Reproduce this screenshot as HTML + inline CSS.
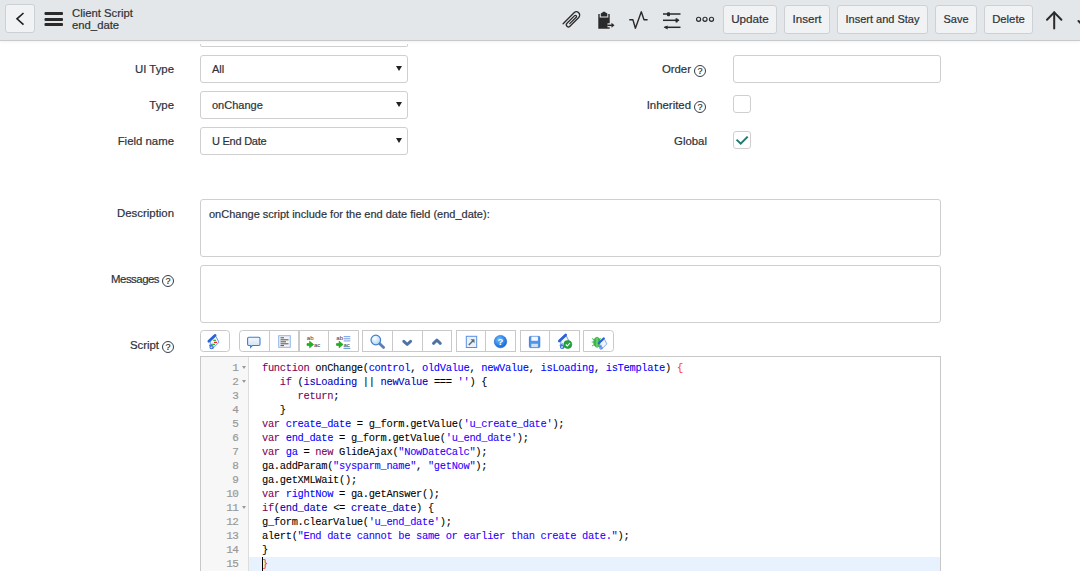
<!DOCTYPE html>
<html><head><meta charset="utf-8">
<style>
*{box-sizing:border-box}
html,body{margin:0;padding:0;width:1080px;height:573px;overflow:hidden;background:#fff}
body{font-family:"Liberation Sans",sans-serif;font-size:11px;color:#2b323b;position:relative;-webkit-text-stroke:0.2px}
.abs{position:absolute}
#hdr{position:absolute;left:0;top:0;width:1080px;height:41px;background:#e4e7ea;border-bottom:1px solid #c8c9cb;box-shadow:0 1px 3px rgba(0,0,0,0.06);z-index:5}
.btn{position:absolute;top:5px;height:29px;background:#f1f2f4;border:1px solid #cdd0d4;border-radius:3px;color:#2e3338;font-size:11px;line-height:26px;text-align:center;white-space:nowrap}
.lbl{position:absolute;text-align:right;white-space:nowrap;color:#2b323b;font-size:11.4px;line-height:12px}
.fld{position:absolute;background:#fff;border:1px solid #cfcfcf;border-radius:3px}
.sel .v{position:absolute;left:11px;top:0;line-height:26px;color:#2b323b}
.sel .arr{position:absolute;right:5px;top:10px;width:0;height:0;border-left:3px solid transparent;border-right:3px solid transparent;border-top:5px solid #222}
.help{display:inline-block;margin-left:3px;position:relative;top:1px;width:12px;height:12px;border:1px solid #343d47;border-radius:50%;font-size:9px;line-height:10px;text-align:center;vertical-align:middle}
.cb{position:absolute;width:18px;height:18px;border:1px solid #cfcfcf;border-radius:3px;background:#fff}
.ln{position:absolute;left:61px;height:14px;line-height:14px;font-family:"Liberation Mono",monospace;font-size:10.4px;letter-spacing:-0.31px;color:#000;white-space:pre;-webkit-text-stroke:0.08px}
.gn{position:absolute;left:0;width:37px;height:14px;line-height:14px;text-align:right;font-family:"Liberation Mono",monospace;font-size:11px;letter-spacing:-0.75px;color:#999;white-space:pre}
.fold{position:absolute;left:41px;width:0;height:0;border-left:2px solid transparent;border-right:2px solid transparent;border-top:3px solid #999}
#gut{position:absolute;left:0;top:0;width:48px;height:100%;background:#f7f7f7;border-right:1px solid #ddd}
#act{position:absolute;left:48px;top:200px;width:700px;height:14px;background:#e8f2ff}
#cur{position:absolute;left:61px;top:200px;width:1px;height:14px;background:#000}
</style></head>
<body>
<div id="hdr">
  <div class="btn" style="left:5px;top:4px;width:30px;height:29px"></div>
  <svg class="abs" style="left:0;top:0" width="1080" height="40">
    <path d="M23.5 13 L17 18.8 L23.5 24.6" fill="none" stroke="#1e2024" stroke-width="1.6"/>
    <rect x="44.5" y="12" width="18.5" height="3" rx="1" fill="#2a2a2a"/>
    <rect x="44.5" y="18" width="18.5" height="3" rx="1" fill="#2a2a2a"/>
    <rect x="44.5" y="23" width="18.5" height="3" rx="1" fill="#2a2a2a"/>
    <g fill="none" stroke="#2a2a2a" stroke-width="1.3" stroke-linecap="round">
      <path transform="translate(572 19.5) rotate(45)" d="M-3.3 9.3 V-6.2 A3.3 3.3 0 0 1 3.3 -6.2 V6.2 A2.1 2.1 0 0 1 -0.9 6.2 V-4.6 A1.1 1.1 0 0 1 1.3 -4.6 V4.5"/>
    </g>
    <g fill="#2a2a2a">
      <path d="M598.3 14 H599.7 V17.6 H608.3 V14 H609.7 V28.7 H598.3 Z"/>
      <path d="M600.8 13.6 L604 11.6 L607.3 13.6 V16.4 H600.8 Z"/>
    </g>
    <path d="M607.5 25.3 H613.6" stroke="#e4e7ea" stroke-width="4"/>
    <path d="M607.3 25.3 H613" stroke="#2a2a2a" stroke-width="1.5"/>
    <path d="M611.5 22.8 L614.5 25.3 L611.5 27.8 Z" fill="#2a2a2a"/>
    <polyline points="629.3,19.8 632.9,19.8 635.4,28.2 641.3,11.8 644,19.8 647.6,19.8" fill="none" stroke="#2a2a2a" stroke-width="1.4" stroke-linejoin="round"/>
    <g stroke="#2a2a2a" stroke-width="1.5">
      <path d="M663 14 H680.5"/><path d="M663 20.3 H679"/><path d="M664.5 27.3 H680.5"/>
    </g>
    <g fill="#2a2a2a">
      <rect x="667" y="12.2" width="3" height="4" rx="1"/>
      <path d="M676 18.4 L679.5 20.3 L676 22.4 Z"/><rect x="675.5" y="18.4" width="2" height="4"/>
      <path d="M667.6 25.4 L663.6 27.3 L667.6 29.4 Z"/>
    </g>
    <g fill="none" stroke="#2a2a2a" stroke-width="1.15">
      <circle cx="698.6" cy="19.3" r="2.05"/><circle cx="705" cy="19.3" r="2.05"/><circle cx="711.5" cy="19.3" r="2.05"/>
    </g>
    <g fill="none" stroke="#2a2a2a" stroke-width="2" stroke-linecap="round">
      <path d="M1047 19.8 L1054.2 12.4 L1061.4 19.8"/><path d="M1054.2 12.6 V28.4"/>
      <path d="M1078.5 21 L1086 28.4 L1093.5 21"/><path d="M1086 12.2 V28"/>
    </g>
  </svg>
  <div class="abs" style="left:72px;top:7px;font-size:11.3px;line-height:12px;color:#2e3338">Client Script<br>end_date</div>
  <div class="btn" style="left:723px;width:54px;font-size:11.7px">Update</div>
  <div class="btn" style="left:784px;width:46px;font-size:11.6px">Insert</div>
  <div class="btn" style="left:837px;width:91px">Insert and Stay</div>
  <div class="btn" style="left:935px;width:42px">Save</div>
  <div class="btn" style="left:984px;width:49px;font-size:11.3px">Delete</div>
</div>

<!-- form -->
<div class="fld" style="left:200px;top:44px;width:208px;height:3px;border-top:none;border-radius:0 0 2px 2px"></div>

<div class="lbl" style="right:906px;top:63px">UI Type</div>
<div class="fld sel" style="left:200px;top:55px;width:208px;height:28px"><span class="v">All</span><i class="arr"></i></div>
<div class="lbl" style="right:906px;top:99px">Type</div>
<div class="fld sel" style="left:200px;top:91px;width:208px;height:28px"><span class="v">onChange</span><i class="arr"></i></div>
<div class="lbl" style="right:906px;top:135px">Field name</div>
<div class="fld sel" style="left:200px;top:127px;width:208px;height:28px"><span class="v" style="letter-spacing:-0.25px">U End Date</span><i class="arr"></i></div>

<div class="lbl" style="right:374px;top:63px">Order<span class="help">?</span></div>
<div class="fld" style="left:733px;top:55px;width:208px;height:28px"></div>
<div class="lbl" style="right:374px;top:99px">Inherited<span class="help">?</span></div>
<div class="cb" style="left:733px;top:95px"></div>
<div class="lbl" style="right:373px;top:135px">Global</div>
<div class="cb" style="left:733px;top:131px"><svg class="abs" style="left:-1px;top:-1px" width="17" height="17"><path d="M3.6 8.6 L7.7 12.7 L14.7 5.6" fill="none" stroke="#1d7a72" stroke-width="2"/></svg></div>

<div class="lbl" style="right:906px;top:207px">Description</div>
<div class="fld" style="left:200px;top:199px;width:741px;height:58px"><span class="abs" style="left:8px;top:8px;line-height:12px;color:#2b323b">onChange script include for the end date field (end_date):</span></div>
<div class="lbl" style="right:906px;top:273px"><span style="letter-spacing:-0.5px">Messages</span><span class="help">?</span></div>
<div class="fld" style="left:200px;top:265px;width:741px;height:58px"></div>
<div class="lbl" style="right:906px;top:339px">Script<span class="help">?</span></div>

<!-- script toolbar -->
<svg class="abs" style="left:0;top:0" width="640" height="356" viewBox="0 0 640 356">
 <defs>
  <linearGradient id="gb" x1="0" y1="0" x2="0" y2="1"><stop offset="0" stop-color="#f4f8fd"/><stop offset="1" stop-color="#cfe0f3"/></linearGradient>
  <radialGradient id="gh" cx="0.4" cy="0.35" r="0.7"><stop offset="0" stop-color="#6fc0ff"/><stop offset="1" stop-color="#0a62d8"/></radialGradient>
  <radialGradient id="gm" cx="0.4" cy="0.35" r="0.7"><stop offset="0" stop-color="#ffffff"/><stop offset="1" stop-color="#a9d2f5"/></radialGradient>
 </defs>
 <g fill="#fff" stroke="#c9c9c9" stroke-width="1">
  <rect x="200.5" y="330.5" width="29" height="21" rx="3"/>
  <path d="M242.5 330.5 H358.5 V351.5 H242.5 A3 3 0 0 1 239.5 348.5 V333.5 A3 3 0 0 1 242.5 330.5 Z"/>
  <rect x="362.5" y="330.5" width="89" height="21"/>
  <rect x="456.5" y="330.5" width="59" height="21"/>
  <rect x="520.5" y="330.5" width="59" height="21"/>
  <path d="M583.5 330.5 H610.5 A3 3 0 0 1 613.5 333.5 V348.5 A3 3 0 0 1 610.5 351.5 H583.5 Z"/>
 </g>
 <g stroke="#c9c9c9" stroke-width="1">
  <path d="M269.5 331 V351"/><path d="M298.5 331 V351"/><path d="M299.5 331 V351"/><path d="M328.5 331 V351"/>
  <path d="M392.5 331 V351"/><path d="M422.5 331 V351"/>
  <path d="M485.5 331 V351"/><path d="M549.5 331 V351"/>
 </g>
 <!-- 1 script -->
 <g transform="translate(0 0)">
  <path d="M210.3 340.8 L215.8 336.2 L219 342.3 L213 348.2 L210.3 345.8 Z" fill="#eef5fd" stroke="#6e9be8" stroke-width="1"/>
  <path d="M208.8 341.3 L215.2 335.3" stroke="#2a62d8" stroke-width="2.6" stroke-linecap="round"/>
  <path d="M209.6 345.6 L212 344.2" stroke="#4f86e6" stroke-width="1.2" stroke-linecap="round"/>
  <circle cx="211.6" cy="347.2" r="1.6" fill="none" stroke="#2f6ae0" stroke-width="1.1"/>
  <path d="M213.2 340.3 H216" stroke="#27b327" stroke-width="1.2"/><path d="M214 342.4 H217" stroke="#e22" stroke-width="1.2"/><path d="M212.3 344.4 H215" stroke="#27b327" stroke-width="1.2"/>
 </g>
 <!-- 2 comment -->
 <path d="M248.8 337.3 H258.8 A1.2 1.2 0 0 1 260 338.5 V344.3 A1.2 1.2 0 0 1 258.8 345.5 H252.3 L250.6 347.3 V345.5 H248.8 A1.2 1.2 0 0 1 247.6 344.3 V338.5 A1.2 1.2 0 0 1 248.8 337.3 Z" fill="url(#gb)" stroke="#3b7fd0" stroke-width="1.1"/>
 <!-- 3 format -->
 <rect x="278.7" y="335.7" width="11.6" height="11.6" fill="#f3f3f3" stroke="#8fb4ec" stroke-width="1"/>
 <g stroke="#555" stroke-width="1"><path d="M280.5 337.8 H284"/><path d="M280.5 339.8 H288.5"/><path d="M280.5 341.8 H286"/><path d="M280.5 343.8 H288.5"/><path d="M280.5 345.6 H284"/></g>
 <!-- 4 replace -->
 <text x="306.8" y="339.6" font-family="Liberation Sans" font-size="6" fill="#333" style="-webkit-text-stroke:0.2px #333">ab</text>
 <path d="M307 343.6 H309.6 V341.2 L313.6 344.5 L309.6 347.8 V345.4 H307 Z" fill="#1fb51f" stroke="#139013" stroke-width="0.6"/>
 <text x="314" y="347" font-family="Liberation Sans" font-size="6" fill="#333" style="-webkit-text-stroke:0.2px #333">ac</text>
 <!-- 5 replace all -->
 <rect x="343.7" y="336" width="6.6" height="5.6" fill="#e3ecf9"/>
 <g stroke="#7ea6e6" stroke-width="0.9"><path d="M343.7 336.5 H350.3"/><path d="M343.7 338.7 H350.3"/><path d="M343.7 340.9 H350.3"/></g>
 <text x="336.3" y="339.6" font-family="Liberation Sans" font-size="6" fill="#333" style="-webkit-text-stroke:0.2px #333">ab</text>
 <path d="M336.5 343.6 H339.1 V341.2 L343.1 344.5 L339.1 347.8 V345.4 H336.5 Z" fill="#1fb51f" stroke="#139013" stroke-width="0.6"/>
 <text x="343.5" y="347" font-family="Liberation Sans" font-size="6" fill="#333" style="-webkit-text-stroke:0.2px #333">ac</text>
 <path d="M343.5 348.3 H350.3" stroke="#3b7fd0" stroke-width="0.9"/>
 <!-- 6 magnifier -->
 <path d="M379 343 L383.6 347.6" stroke="#5a7fb2" stroke-width="2.8" stroke-linecap="round"/>
 <circle cx="375.8" cy="340" r="4.8" fill="url(#gm)" stroke="#3f7fd0" stroke-width="1.2"/>
 <!-- 7 down / 8 up -->
 <path d="M403.8 341.3 L407.2 344.5 L410.6 341.3" fill="none" stroke="#4a7fc4" stroke-width="3" stroke-linecap="round" stroke-linejoin="round"/>
 <path d="M403.8 341.3 L407.2 344.5 L410.6 341.3" fill="none" stroke="#5c6f82" stroke-width="1.5" stroke-linecap="round" stroke-linejoin="round"/>
 <path d="M433.5 343.3 L436.9 340.1 L440.3 343.3" fill="none" stroke="#4a7fc4" stroke-width="3" stroke-linecap="round" stroke-linejoin="round"/>
 <path d="M433.5 343.3 L436.9 340.1 L440.3 343.3" fill="none" stroke="#5c6f82" stroke-width="1.5" stroke-linecap="round" stroke-linejoin="round"/>
 <!-- 9 fullscreen -->
 <rect x="466.3" y="336.3" width="10.4" height="11.2" fill="#eaf1fb" stroke="#5a8fe0" stroke-width="1"/>
 <path d="M468.8 345 L473.5 340.3" stroke="#5a6a7a" stroke-width="1.5"/>
 <path d="M470.5 339.3 H474.5 V343.3 Z" fill="#5a6a7a"/>
 <!-- 10 help -->
 <circle cx="500.5" cy="341.6" r="6.2" fill="url(#gh)" stroke="#1b62c8" stroke-width="0.6"/>
 <text x="500.5" y="345.3" text-anchor="middle" font-family="Liberation Sans" font-weight="bold" font-size="9.5" fill="#fff">?</text>
 <!-- 11 save -->
 <rect x="529.4" y="336.4" width="10.4" height="11.2" rx="1" fill="#4f95ea" stroke="#2d6fd6" stroke-width="0.8"/>
 <rect x="531.3" y="336.6" width="6.6" height="4.2" fill="#f4f8ff"/>
 <rect x="531.3" y="343.8" width="6.6" height="3.4" fill="#cfe0f6"/>
 <!-- 12 check script -->
 <g transform="translate(350.5 -0.3)">
  <path d="M210.3 340.8 L215.8 336.2 L219 342.3 L213 348.2 L210.3 345.8 Z" fill="#eef5fd" stroke="#6e9be8" stroke-width="1"/>
  <path d="M208.8 341.3 L215.2 335.3" stroke="#2a62d8" stroke-width="2.6" stroke-linecap="round"/>
  <path d="M209.6 345.6 L212 344.2" stroke="#4f86e6" stroke-width="1.2" stroke-linecap="round"/>
  <circle cx="211.6" cy="347.2" r="1.6" fill="none" stroke="#2f6ae0" stroke-width="1.1"/>
  
 </g>
 <circle cx="567.8" cy="344.5" r="4" fill="#22a63a" stroke="#138a2a" stroke-width="0.6"/>
 <path d="M565.8 344.5 L567.3 346 L570 343" fill="none" stroke="#fff" stroke-width="1.1"/>
 <!-- 13 bug -->
 <g stroke="#2fb83f" stroke-width="0.9"><path d="M592 338.5 L594.5 340"/><path d="M591.7 342 H594"/><path d="M592 346 L594.5 344.5"/><path d="M601 338.5 L598.5 340"/></g>
 <ellipse cx="597" cy="342.3" rx="3.3" ry="5" fill="#3cbc4a" stroke="#2a9a36" stroke-width="0.6"/>
 <path d="M597 337.5 V347" stroke="#9be39f" stroke-width="0.8"/>
 <g transform="translate(602.5 343.3) scale(0.8) translate(-213.5 -341.5)"><g transform="translate(0 0)">
  <path d="M210.3 340.8 L215.8 336.2 L219 342.3 L213 348.2 L210.3 345.8 Z" fill="#eef5fd" stroke="#6e9be8" stroke-width="1"/>
  <path d="M208.8 341.3 L215.2 335.3" stroke="#2a62d8" stroke-width="2.6" stroke-linecap="round"/>
  <path d="M209.6 345.6 L212 344.2" stroke="#4f86e6" stroke-width="1.2" stroke-linecap="round"/>
  <circle cx="211.6" cy="347.2" r="1.6" fill="none" stroke="#2f6ae0" stroke-width="1.1"/>
  
 </g>
 </g>
</svg>
<!-- editor -->
<div class="abs" id="ed" style="left:200px;top:356px;width:741px;height:215px;border:1px solid #c8c8c8;border-bottom:none;background:#fff;overflow:hidden">
<div id="gut"></div><div id="act"></div>
<div class="ln" style="top:4px"><span style="color:#7f0055">function</span> onChange(<span style="color:#0000ff">control</span>, <span style="color:#0000ff">oldValue</span>, <span style="color:#0000ff">newValue</span>, <span style="color:#0000ff">isLoading</span>, <span style="color:#0000ff">isTemplate</span>) <span style="color:#ff3b2b">{</span></div>
<div class="gn" style="top:4px">1</div>
<i class="fold" style="top:9px"></i>
<div class="ln" style="top:18px">   <span style="color:#7f0055">if</span> (<span style="color:#0000c0">isLoading</span> || <span style="color:#0000c0">newValue</span> === <span style="color:#2a00ff">&#x27;&#x27;</span>) {</div>
<div class="gn" style="top:18px">2</div>
<i class="fold" style="top:23px"></i>
<div class="ln" style="top:32px">      <span style="color:#7f0055">return</span>;</div>
<div class="gn" style="top:32px">3</div>
<div class="ln" style="top:46px">   }</div>
<div class="gn" style="top:46px">4</div>
<div class="ln" style="top:60px"><span style="color:#7f0055">var</span> <span style="color:#0000ff">create_date</span> = g_form.getValue(<span style="color:#2a00ff">&#x27;u_create_date&#x27;</span>);</div>
<div class="gn" style="top:60px">5</div>
<div class="ln" style="top:74px"><span style="color:#7f0055">var</span> <span style="color:#0000ff">end_date</span> = g_form.getValue(<span style="color:#2a00ff">&#x27;u_end_date&#x27;</span>);</div>
<div class="gn" style="top:74px">6</div>
<div class="ln" style="top:88px"><span style="color:#7f0055">var</span> <span style="color:#0000ff">ga</span> = <span style="color:#7f0055">new</span> GlideAjax(<span style="color:#2a00ff">&quot;NowDateCalc&quot;</span>);</div>
<div class="gn" style="top:88px">7</div>
<div class="ln" style="top:102px">ga.addParam(<span style="color:#2a00ff">&quot;sysparm_name&quot;</span>, <span style="color:#2a00ff">&quot;getNow&quot;</span>);</div>
<div class="gn" style="top:102px">8</div>
<div class="ln" style="top:116px">ga.getXMLWait();</div>
<div class="gn" style="top:116px">9</div>
<div class="ln" style="top:130px"><span style="color:#7f0055">var</span> <span style="color:#0000ff">rightNow</span> = ga.getAnswer();</div>
<div class="gn" style="top:130px">10</div>
<div class="ln" style="top:144px"><span style="color:#7f0055">if</span>(<span style="color:#0000c0">end_date</span> &lt;= <span style="color:#0000c0">create_date</span>) {</div>
<div class="gn" style="top:144px">11</div>
<i class="fold" style="top:149px"></i>
<div class="ln" style="top:158px">g_form.clearValue(<span style="color:#2a00ff">&#x27;u_end_date&#x27;</span>);</div>
<div class="gn" style="top:158px">12</div>
<div class="ln" style="top:172px">alert(<span style="color:#2a00ff">&quot;End date cannot be same or earlier than create date.&quot;</span>);</div>
<div class="gn" style="top:172px">13</div>
<div class="ln" style="top:186px">}</div>
<div class="gn" style="top:186px">14</div>
<div class="ln" style="top:200px"><span style="color:#ff3b2b">}</span></div>
<div class="gn" style="top:200px">15</div>

<div id="cur"></div>
</div>
</body></html>
